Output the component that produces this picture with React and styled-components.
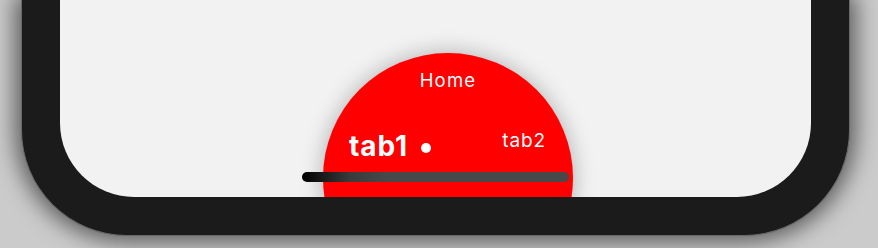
import styled, { createGlobalStyle } from 'styled-components';

const GlobalStyle = createGlobalStyle`
  html, body {
    margin: 0;
    padding: 0;
    background: #cbcbcb;
    font-family: Inter, "Liberation Sans", sans-serif;
  }
  #root {
    height: 248px;
    overflow: hidden;
  }
`;

const Page = styled.div`
  height: 248px;
  padding: 0 28px 0 21px;
  box-sizing: border-box;
`;

const Device = styled.div`
  height: 236px;
  box-sizing: border-box;
  background: #1b1b1b;
  border: 1px solid #6a6a6a;
  border-top: none;
  border-radius: 0 0 106px 106px;
  padding: 0 38px 38px;
  box-shadow: 0 0 22px 6px rgba(0, 0, 0, 0.55);
`;

const Screen = styled.div`
  height: 100%;
  background: #f2f2f2;
  border-radius: 0 0 74px 74px;
  overflow: hidden;
  display: flex;
  justify-content: center;
  padding: 53px 0 0 25px;
  box-sizing: border-box;
`;

const Disc = styled.div`
  flex: none;
  width: 250px;
  height: 250px;
  border-radius: 50%;
  background: #ff0000;
  box-shadow: 0 0 22px rgba(0, 0, 0, 0.28);
  display: flex;
  flex-direction: column;
  align-items: center;
  padding-top: 16px;
  box-sizing: border-box;
  color: #fff;
`;

const Title = styled.div`
  font-size: 18.5px;
  line-height: 22px;
  letter-spacing: 1.2px;
`;

const TabRow = styled.div`
  align-self: stretch;
  display: flex;
  align-items: center;
  margin-top: 39px;
  padding: 0 27px 0 26px;
`;

const Tab = styled.span`
  font-size: ${(p) => (p.$active ? '28px' : '19px')};
  font-weight: ${(p) => (p.$active ? 700 : 400)};
  line-height: ${(p) => (p.$active ? '33px' : '22px')};
  letter-spacing: 0.9px;
  margin-bottom: ${(p) => (p.$active ? '0' : '11px')};
  &:last-child {
    margin-left: auto;
  }
`;

const Dot = styled.span`
  width: 10px;
  height: 10px;
  border-radius: 50%;
  background: #fff;
  margin: 2px 0 0 13px;
`;

const Track = styled.div`
  align-self: flex-start;
  margin: 9px 0 0 -21px;
  width: 267px;
  height: 10px;
  border-radius: 5px;
  background: linear-gradient(to right, #000 0%, #3a3a3a 18%, #484848 32%, #484848 100%);
`;

export default function App() {
  return (
    <>
      <GlobalStyle />
      <Page>
        <Device>
          <Screen>
            <Disc>
              <Title>Home</Title>
              <TabRow>
                <Tab $active>tab1</Tab>
                <Dot />
                <Tab>tab2</Tab>
              </TabRow>
              <Track />
            </Disc>
          </Screen>
        </Device>
      </Page>
    </>
  );
}
